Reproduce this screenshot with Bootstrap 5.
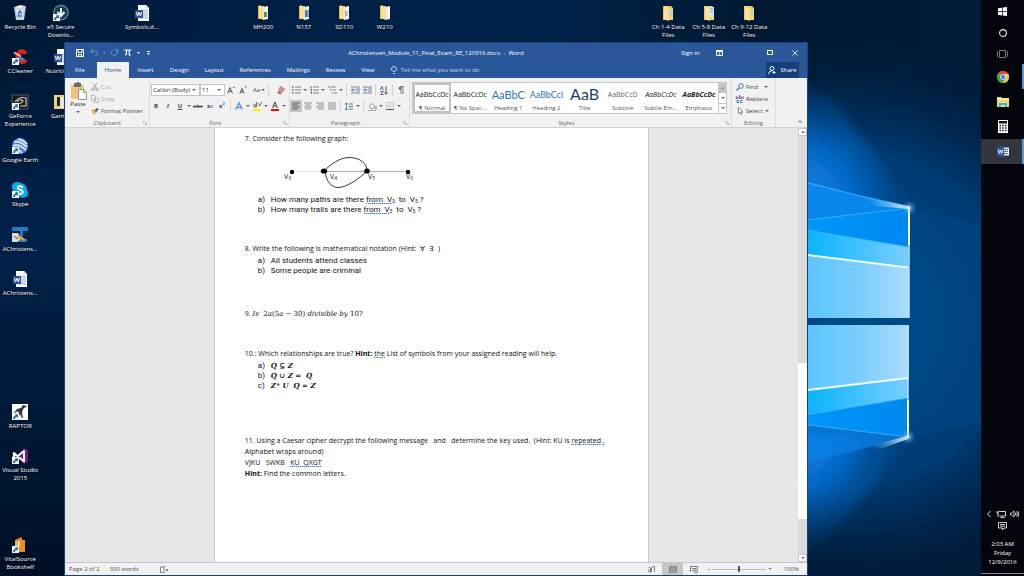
<!DOCTYPE html>
<html lang="en">
<head>
<meta charset="utf-8">
<meta name="viewport" content="width=device-width, initial-scale=1">
<title>AChristensen_Module_11_Final_Exam_RE_120916.docx - Word</title>
<link rel="stylesheet" href="https://cdn.jsdelivr.net/npm/bootstrap@5.3.0/dist/css/bootstrap.min.css">
<style>
body{font:6px/8px "Open Sans","Noto Sans",sans-serif;color:#444;background:#001a38}
svg{display:block;overflow:visible}
.btn{--bs-btn-font-size:6px;--bs-btn-line-height:8px;--bs-btn-padding-x:0;--bs-btn-padding-y:0;--bs-btn-border-width:0;--bs-btn-border-radius:0;--bs-btn-color:inherit;--bs-btn-font-family:inherit;display:flex;align-items:center;justify-content:center;white-space:nowrap;color:inherit;font:inherit}
/* desktop */
.icons{display:grid;grid-template-columns:repeat(24,4.13%);grid-auto-rows:7.7vh;justify-items:center}
.shortcut{width:44px;padding-top:5px;color:#fff;text-decoration:none;text-align:center;text-shadow:0 1px 1px #000}
.shortcut svg{width:16px;height:16px;margin:0 auto 2px}
/* word window */
.wd{top:43px;left:65px;right:174px;bottom:1px;background:#e6e6e6;box-shadow:0 0 0 1px #1c3f75}
.brand{background:#2a579a;color:#fff}
.titlebar{height:19px}
.titlebar .side{flex:1 1 0}
.wintools .btn{width:25px}
.qat .btn{width:14px}
.qat .btn.narrow{width:6px}
.tabs{height:16px}
.tabs a{display:flex;align-items:center;padding:0 8px;color:#fff;text-decoration:none}
.tabs a.on{background:#f1f1f1;color:#2a579a}
.tabs a.file{margin:0 4px 0 2px}
.share{background:#143f78;width:33px}
.ribbon{height:50px;background:#f1f1f1;border-bottom:1px solid #d2d2d2}
.rgroup{border-right:1px solid #dcdcdc;padding-top:3px}
.rlabel{height:8px;color:#666;text-align:center;position:relative;margin-top:auto}
.rlabel svg{position:absolute;right:2px;top:2px}
.row12{height:12px;display:flex;margin-top:3px}
.row12+.row12{margin-top:4px}
.i12{width:12px;height:12px}
.i6{width:6px;height:12px}
.i8{width:6px;height:8px}
.sep{width:5px;height:12px;background:linear-gradient(#d4d4d4,#d4d4d4) center/1px 100% no-repeat}
.cmd{height:12px;gap:2px}
.combo{position:relative;background:#fff;border:1px solid #c6c6c6;display:flex}
.combo select{appearance:none;border:0;background:none;padding:0 0 0 1px;font:inherit;color:#333;width:100%;line-height:10px}
.combo::after,.caret::after{content:"";border:2px solid transparent;border-top-color:#666;border-bottom:0;width:0;height:0}
.combo::after{position:absolute;right:3px;top:4px}
.pressed{background:#c5c5c5}
.gallery{height:32px;background:#fff;border:1px solid #c6c6c6;margin:1px 4px 0 2px}
.gallery .btn{flex:1 1 0;min-width:0;flex-direction:column;color:#555}
.gallery .btn.on{box-shadow:inset 0 0 0 2px #c3c3c3}
.sample{height:18px;line-height:18px;margin-top:2px;font-size:7px;color:#222}
.s-h{font:11px/18px Lato,sans-serif;color:#2e74b5}
.s-h2{font:9px/18px Lato,sans-serif;color:#2e74b5}
.s-t{font:16px/16px Lato,sans-serif;color:#1f3f66}
.gscroll{width:8px;border-left:1px solid #c6c6c6}
.gscroll .btn+.btn{border-top:1px solid #c6c6c6}
.gscroll .btn{width:100%}
/* document */
.sheet{width:59.4%;background:#fff;border:solid #c8c8c8;border-width:0 1px;padding:5px 0 0 30px;font-size:7px;line-height:11px;color:#111;white-space:pre}
.sheet p{margin:0}
.sheet ol{list-style:none;margin:2px 0 0;padding:0 0 0 13px;font:8px/10px Roboto,sans-serif}
.sheet li{display:flex}
.sheet li>span:first-child{width:13px}
.sheet sub,.sheet sup{font-size:5px;line-height:0}
.math{font-family:"DejaVu Serif",serif;font-style:italic;font-size:7px}
.math i{font-style:normal}
.sq{background:linear-gradient(90deg,#3f78d8 50%,#bcd0f2 50%) 0 100%/2px 1px repeat-x}
.graph{width:180px;height:49px}
.gap-a{height:28px}.gap-b{height:32px}.gap-c{height:44px}
.vscroll{width:9px;background:#dadada}
.vscroll .btn{height:8px;background:#fff;border:1px solid #c6c6c6}
.thumb{background:#fff;flex:0 0 36%}
.thumb-end{flex:0 0 8%}
.status{height:13px;background:#f1f1f1;border-top:1px solid #c6c6c6;color:#555}
.words{margin:0 21px 0 10px}
.vbtn{width:21px}
.zoom{appearance:none;width:54px;height:9px;background:linear-gradient(#bbb,#bbb) center/100% 1px no-repeat;margin:0 2px}
.zoom::-webkit-slider-thumb{appearance:none;width:2px;height:6px;background:#555}
/* taskbar */
.taskbar{width:43px;background:#02060c;color:#fff;padding:1px 0 2px}
.taskbar .btn{width:100%;height:25px}
.taskbar .sys{height:21px}
.taskbar .open{box-shadow:inset -2px 0 #5b9bd5}
.taskbar .active{background:#33373b}
.clock{line-height:9px;margin:9px 0 6px}
.edge{border-top:1px solid #888}
</style>
</head>
<body class="vh-100 d-flex overflow-hidden">

<svg width="0" height="0" class="position-absolute" aria-hidden="true">
<defs>
<symbol id="lnk" viewBox="0 0 7 7"><rect width="7" height="7" fill="#f4f8fc"/><path d="M1.3 6V4.5Q1.4 3 3.3 2.900V1.300H5.800V4.600H4.800V3.800Q3 3.600 3 6Z" fill="#1c5ba8"/></symbol>
<symbol id="folder" viewBox="0 0 16 16"><path d="M3 1h6v13H3z" fill="#e3bc53"/><path d="M4 0l5 2v13l-5-2z" fill="#fbdf8d"/><path d="M8 2l5-1v13l-5 1z" fill="#f2f2ee"/><path d="M9 2v13" stroke="#cfcbb8" stroke-width=".7"/></symbol>
<symbol id="folder2" viewBox="0 0 16 16"><path d="M3 1h8l2 2v12H3z" fill="#edc659"/><path d="M4 1l5 2v13l-5-2z" fill="#ffe398"/><path d="M8 3h5v12H8z" fill="#f3d683"/><path d="M10 5h2v6h-2z" fill="#a8cfe6"/></symbol>
<symbol id="docx" viewBox="0 0 16 16"><path d="M4 0h8l3 3v13H4z" fill="#fff"/><path d="M12 0v3h3" fill="#c8d4e4"/><path d="M9 5h5M9 7h5M9 9h5M9 11h5M6 13h8" stroke="#7b98c4" stroke-width=".8"/><rect x="1" y="5" width="8" height="8" fill="#2a5699"/><path d="M2.500 7l1 4L5 7.300 6.500 11l1-4" fill="none" stroke="#fff" stroke-width="1"/></symbol>
<symbol id="launch" viewBox="0 0 4 4"><path d="M0 3V0h3M2 2l2 2M4 2v2H2" fill="none" stroke="#888" stroke-width=".7"/></symbol>
</defs>
</svg>

<main class="position-relative flex-grow-1 overflow-hidden">
<svg class="position-absolute w-100 h-100" viewBox="0 0 981 576" preserveAspectRatio="xMaxYMid slice" aria-hidden="true">
<defs>
<linearGradient id="base" x1="0" y1="0" x2="1" y2="0"><stop offset="0" stop-color="#001733"/><stop offset=".14" stop-color="#001d40"/><stop offset=".55" stop-color="#00234a"/><stop offset=".78" stop-color="#001832"/><stop offset="1" stop-color="#001a38"/></linearGradient>
<linearGradient id="leftside" x1="0" y1="0" x2="0" y2="1"><stop offset="0" stop-color="#00193a" stop-opacity="0"/><stop offset=".4" stop-color="#002249"/><stop offset=".65" stop-color="#001b3c"/><stop offset="1" stop-color="#000f26"/></linearGradient>
<radialGradient id="glow" gradientUnits="userSpaceOnUse" cx="850" cy="318" r="280"><stop offset="0" stop-color="#005cae"/><stop offset=".3" stop-color="#004683"/><stop offset=".6" stop-color="#003a72"/><stop offset="1" stop-color="#00234a" stop-opacity="0"/></radialGradient>
<radialGradient id="beam" gradientUnits="userSpaceOnUse" cx="800" cy="200" r="130"><stop offset="0" stop-color="#0a86ec"/><stop offset=".4" stop-color="#066cce" stop-opacity=".95"/><stop offset="1" stop-color="#00407c" stop-opacity="0"/></radialGradient>
<radialGradient id="beam2" gradientUnits="userSpaceOnUse" cx="800" cy="440" r="120"><stop offset="0" stop-color="#0a86ec"/><stop offset=".4" stop-color="#066cce" stop-opacity=".9"/><stop offset="1" stop-color="#00407c" stop-opacity="0"/></radialGradient>
<linearGradient id="pane" x1="0" y1="0" x2="1" y2="0"><stop offset="0" stop-color="#55c4fe"/><stop offset=".6" stop-color="#80cffe"/><stop offset="1" stop-color="#abdcff"/></linearGradient>
<linearGradient id="cyan" x1="0" y1="0" x2="1" y2="0"><stop offset="0" stop-color="#00b2fe"/><stop offset="1" stop-color="#78ceff"/></linearGradient>
<linearGradient id="blue" x1="0" y1="0" x2="1" y2="0"><stop offset="0" stop-color="#0098fa"/><stop offset="1" stop-color="#0088f0"/></linearGradient>
<linearGradient id="flare" x1="0" y1="0" x2="1" y2="0"><stop offset="0" stop-color="#2cb0ff" stop-opacity="0"/><stop offset="1" stop-color="#f2fbff"/></linearGradient>
<radialGradient id="spark"><stop offset="0" stop-color="#fff"/><stop offset=".3" stop-color="#8fd4ff" stop-opacity=".5"/><stop offset="1" stop-color="#1b82dc" stop-opacity="0"/></radialGradient>
<filter id="soft" x="-20%" y="-20%" width="140%" height="140%"><feGaussianBlur stdDeviation="5"/></filter>
</defs>
<rect width="981" height="576" fill="url(#base)"/>
<rect width="64" height="576" fill="url(#leftside)"/>
<rect x="560" y="38" width="421" height="538" fill="url(#glow)"/>
<path d="M780 70L835 100 880 160 909 208 780 208z" fill="url(#beam)" filter="url(#soft)"/>
<path d="M780 570L840 525 880 480 908 437 780 430z" fill="url(#beam2)" filter="url(#soft)"/>
<path d="M800 180L909 208 800 222z" fill="#0887ec"/>
<path d="M800 465L908 437 800 423z" fill="#0880e4" opacity=".75"/>
<path d="M909 208L981 226V423L909 437z" fill="#004a8a" opacity=".45"/>
<path d="M800 221L909 207V318H800z" fill="url(#blue)"/>
<path d="M800 229L908 247V268H800z" fill="url(#cyan)"/>
<path d="M800 254L909 268V318H800z" fill="url(#pane)"/>
<path d="M800 325H909V379L800 392z" fill="url(#pane)"/>
<path d="M800 391L908 378V398L800 416z" fill="url(#cyan)"/>
<path d="M800 416L908 398V437L800 424z" fill="url(#blue)"/>
<path d="M800 254L908 267.500M800 391L908 378" stroke="#f0fbff" stroke-width="1.800"/>
<path d="M800 181L909 208M800 221L909 208M800 229L908 247M800 416L908 398M800 424L908 437" stroke="#4fbcff" stroke-width=".7"/>
<path d="M909 207V318" stroke="#b8e4ff" stroke-width="1.500"/><path d="M908 325V437" stroke="#b8e4ff" stroke-width="1.500"/>
<path d="M909 208V245M908 400V437" stroke="#fff" stroke-width="2"/>
<path d="M862 195L910 206.500 909 209 875 206z" fill="url(#flare)"/>
<path d="M870 446L907 436 908 439 880 449z" fill="url(#flare)"/>
<circle cx="909" cy="208" r="8" fill="url(#spark)"/><circle cx="908" cy="437" r="8" fill="url(#spark)"/>
<rect x="800" y="318" width="109" height="7" fill="#004a84"/>
</svg>

<div class="icons position-absolute w-100 h-100">
<a href="#" class="shortcut" style="grid-area:1/1"><svg viewBox="0 0 16 16"><path d="M2 2l12-1-2 14H4z" fill="#c9d0d6"/><path d="M3 2l5 1 5-2-5-1z" fill="#f5f7f8"/><path d="M5 4l1 10M11 4l-1 10" stroke="#eef1f3"/><path d="M6 9l2-3 2 3M10 11H6l1-2" fill="none" stroke="#1e7fd0" stroke-width="1.300"/></svg>Recycle Bin</a>
<a href="#" class="shortcut" style="grid-area:1/2"><svg viewBox="0 0 16 16"><circle cx="8" cy="7.500" r="7.200" fill="#163d4d" stroke="#6f8b91" stroke-width="1.200"/><path d="M8 3v8M4.500 7L8 11l3.500-4" stroke="#e8f4f4" stroke-width="2" fill="none"/><use href="#lnk" x="0" y="9" width="7" height="7"/></svg>e5 Secure<br>Downlo...</a>
<a href="#" class="shortcut" style="grid-area:1/4"><svg><use href="#docx"/></svg>Symbols.d...</a>
<a href="#" class="shortcut" style="grid-area:1/7"><svg viewBox="0 0 16 16"><use href="#folder"/><path d="M9 7h3v5H9z" fill="#4b9a62"/></svg>MH200</a>
<a href="#" class="shortcut" style="grid-area:1/8"><svg viewBox="0 0 16 16"><use href="#folder"/><path d="M9 5h2v7H9z" fill="#2d7fc4"/><path d="M12 5v7" stroke="#444"/></svg>N137</a>
<a href="#" class="shortcut" style="grid-area:1/9"><svg viewBox="0 0 16 16"><use href="#folder"/><path d="M9 6h2.500v5H9z" fill="#a9b3c0"/></svg>SD110</a>
<a href="#" class="shortcut" style="grid-area:1/10"><svg><use href="#folder"/></svg>W210</a>
<a href="#" class="shortcut" style="grid-area:1/17"><svg><use href="#folder2"/></svg>Ch 1-4 Data<br>Files</a>
<a href="#" class="shortcut" style="grid-area:1/18"><svg viewBox="0 0 16 16"><use href="#folder2"/><path d="M8 2h5v10H8z" fill="#d6e8f4"/><path d="M9 4h3M9 7h3" stroke="#5f9fce"/></svg>Ch 5-8 Data<br>Files</a>
<a href="#" class="shortcut" style="grid-area:1/19"><svg><use href="#folder2"/></svg>Ch 9-12 Data<br>Files</a>
<a href="#" class="shortcut" style="grid-area:2/1"><svg viewBox="0 0 16 16"><path d="M15.500 4Q13-.5 8.500.500 3 2 3.500 8q.5 6.500 6.500 7 4 0 5.500-3l-3-2q-1.500 2-3.500 1-2-1.500-1-4.500 1.500-3 4-1z" fill="#d8261c"/><path d="M2 3.500l7 4" stroke="#e2c79c" stroke-width="1.600"/><path d="M7.500 7.500l5 2-1.500 3-5-3z" fill="#3b8fd0"/><use href="#lnk" x="0" y="9" width="7" height="7"/></svg>CCleaner</a>
<a href="#" class="shortcut" style="grid-area:2/2"><svg><use href="#docx"/></svg>Nutrition...</a>
<a href="#" class="shortcut" style="grid-area:3/1"><svg viewBox="0 0 16 16"><rect y="1" width="16" height="14" fill="#17191a" stroke="#70757a" stroke-width=".7"/><path d="M3 8q4-6 11-4v8H8M5 8q3-4 6-1-2 3-4 2" fill="none" stroke="#c7cbcd" stroke-width="1.200"/><use href="#lnk" x="0" y="9" width="7" height="7"/></svg>GeForce<br>Experience</a>
<a href="#" class="shortcut" style="grid-area:3/2"><svg viewBox="0 0 16 16"><path d="M1 1h11v14H1z" fill="#efd17c"/><path d="M4 3h3v9H4z" fill="#222"/><path d="M7 3h5v11H7z" fill="#e8e6dc"/></svg>Games</a>
<a href="#" class="shortcut" style="grid-area:4/1"><svg viewBox="0 0 16 16"><circle cx="8" cy="8" r="8" fill="#4f83e8"/><path d="M2 4q5-2 13 5M1 8q5-3 13 4M6 1q5 1 9 5M3 12q4-1 7 3" fill="none" stroke="#e3edfc" stroke-width="1.700"/><use href="#lnk" x="0" y="9" width="7" height="7"/></svg>Google Earth</a>
<a href="#" class="shortcut" style="grid-area:5/1"><svg viewBox="0 0 16 16"><circle cx="5" cy="5" r="5" fill="#00aff0"/><circle cx="11" cy="11" r="5" fill="#00aff0"/><circle cx="8" cy="8" r="7" fill="#00aff0"/><path d="M10.800 5.500Q8 3 6 5q-1 2 2.500 2.800Q12 9 10.500 11 8 13 5.500 10.500" fill="none" stroke="#fff" stroke-width="1.900"/><use href="#lnk" x="0" y="9" width="7" height="7"/></svg>Skype</a>
<a href="#" class="shortcut" style="grid-area:6/1"><svg viewBox="0 0 16 16"><path d="M0 0h16v4h-5v8h4v3H7v-3h1V4H0z" fill="#2a78bd"/><path d="M0 6h6l3 5-3 4H0z" fill="#dcdcd6"/><path d="M2 9l4 3" stroke="#555"/><path d="M6 8l7 4-1 2-7-4z" fill="#f0a830"/></svg>AChristens...</a>
<a href="#" class="shortcut" style="grid-area:7/1"><svg><use href="#docx"/></svg>AChristens...</a>
<a href="#" class="shortcut" style="grid-area:10/1"><svg viewBox="0 0 16 16"><rect width="16" height="16" fill="#fff"/><path d="M15 2l-4-1-2 3-4 1-4 5 5-3 1 3-2 4h1l2-4 2 4h1l-1-5 1-4z" fill="#3a3038"/><use href="#lnk" x="0" y="9" width="7" height="7"/></svg>RAPTOR</a>
<a href="#" class="shortcut" style="grid-area:11/1"><svg viewBox="0 0 16 16"><path d="M0 5l2-1 4 3.500 6-7.500 4 2v12l-4 2-6-6-4 3-2-1z" fill="#68217a"/><path d="M2 5l10 8.500V3L2 11z" fill="none" stroke="#fff" stroke-width="1.900" stroke-linejoin="round"/><use href="#lnk" x="0" y="9" width="7" height="7"/></svg>Visual Studio<br>2015</a>
<a href="#" class="shortcut" style="grid-area:13/1"><svg viewBox="0 0 16 16"><path d="M3 3l7-3v3h3v12H3z" fill="#f58a1f"/><path d="M3 4h3v11H3z" fill="#fbb03b"/><path d="M6 4h2v5l-1-1-1 1z" fill="#fff3df"/><use href="#lnk" x="0" y="9" width="7" height="7"/></svg>VitalSource<br>Bookshelf</a>
</div>

<section class="wd position-absolute d-flex flex-column">
<header class="brand">
<div class="titlebar d-flex align-items-stretch">
<div class="qat side d-flex">
<button class="btn ms-2" aria-label="Save"><svg width="8" height="8" viewBox="0 0 8 8"><path d="M.5.500h7v7h-7zM2 .5v3h4v-3M2.500 7.500V5.500h3v2" fill="none" stroke="#fff"/></svg></button>
<button class="btn" aria-label="Undo"><svg width="8" height="7" viewBox="0 0 8 7"><path d="M3 0L.7 2.300 3 4.500M1 2.300h4q2.500 0 2.500 2T5 6.500" fill="none" stroke="#6f90c2"/></svg></button>
<button class="btn narrow" aria-label="Undo menu"><svg width="3" height="2"><path d="M0 0h3L1.500 2z" fill="#5f83ba"/></svg></button>
<button class="btn" aria-label="Redo"><svg width="8" height="7" viewBox="0 0 8 7"><path d="M6.500 1.500A3 3 0 1 1 3 .9M4.500.5h3v3" fill="none" stroke="#6f90c2"/></svg></button>
<button class="btn" aria-label="Equation"><svg width="8" height="7" viewBox="0 0 8 7"><path d="M.3 1h7.200M2.500 1v3.500L1.500 6.500M5.200 1v4.500q.3 1 1.500.5" fill="none" stroke="#fff" stroke-width="1.200"/></svg></button>
<button class="btn narrow" aria-label="Equation menu"><svg width="3" height="2"><path d="M0 0h3L1.500 2z" fill="#fff"/></svg></button>
<button class="btn" aria-label="Customize toolbar"><svg width="3" height="4" viewBox="0 0 3 4"><path d="M0 .5h3" stroke="#fff"/><path d="M0 2h3L1.500 4z" fill="#fff"/></svg></button>
</div>
<div class="align-self-center">AChristensen_Module_11_Final_Exam_RE_120916.docx&nbsp; - &nbsp;Word</div>
<div class="wintools side d-flex justify-content-end">
<button class="btn me-1">Sign in</button>
<button class="btn" aria-label="Ribbon display options"><svg width="7" height="6" viewBox="0 0 7 6"><path d="M.5.500h6v5h-6z" fill="none" stroke="#fff"/><path d="M0 0h7v2H0z" fill="#fff"/><path d="M3.500 2.500v2.500M2.500 3.700l1-1 1 1" stroke="#fff" stroke-width=".6" fill="none"/></svg></button>
<button class="btn" aria-label="Minimize"><svg width="6" height="1"><path d="M0 .5h6" stroke="#44699f"/></svg></button>
<button class="btn" aria-label="Maximize"><svg width="6" height="5" viewBox="0 0 6 5"><path d="M.5.500h5v4h-5z" fill="none" stroke="#fff"/></svg></button>
<button class="btn" aria-label="Close"><svg width="6" height="6" viewBox="0 0 6 6"><path d="M.5.500l5 5M5.500.500l-5 5" stroke="#fff" stroke-width=".8"/></svg></button>
</div>
</div>
<nav class="tabs d-flex">
<a href="#" class="file">File</a><a href="#" class="on">Home</a><a href="#">Insert</a><a href="#">Design</a><a href="#">Layout</a><a href="#">References</a><a href="#">Mailings</a><a href="#">Review</a><a href="#">View</a>
<a href="#" class="gap-1" style="color:#c5d3e8"><svg width="6" height="8" viewBox="0 0 6 8"><path d="M2 5.500Q.5 4.500.5 2.800 1 .5 3 .5t2.500 2.300Q5.500 4.500 4 5.500zM2 7.500h2" fill="none" stroke="#dbe5f3" stroke-width=".9"/></svg>Tell me what you want to do</a>
<button class="btn share ms-auto me-2 gap-1"><svg width="8" height="8" viewBox="0 0 8 8"><circle cx="4" cy="2.500" r="2" fill="none" stroke="#fff"/><path d="M.5 8Q1 4.800 4 4.800M6 5v3M4.500 6.500h3" fill="none" stroke="#fff"/></svg>Share</button>
</nav>
</header>

<div class="ribbon d-flex">
<div class="rgroup d-flex flex-column" style="width:85px">
<div class="d-flex">
<button class="btn flex-column" style="width:26px"><svg width="18" height="18" viewBox="0 0 18 18"><path d="M2 3h13v14H2z" fill="#eec47a"/><path d="M5 1h7v4H5z" fill="#6b6b6b"/><path d="M8 .5h2" stroke="#6b6b6b"/><path d="M9.500 7.500h5l3 3v7h-8z" fill="#fff" stroke="#7b7b7b" stroke-width=".8"/><path d="M14.500 7.500v3h3" fill="none" stroke="#7b7b7b" stroke-width=".7"/></svg><span class="text-dark">Paste</span><span class="caret i8 d-flex justify-content-center align-items-center"></span></button>
<div>
<button class="btn cmd" style="color:#a8a8a8"><svg width="8" height="8" viewBox="0 0 8 8"><path d="M2 0l3.500 5.500M6 0L2.500 5.500" stroke="#aaa"/><circle cx="1.800" cy="6.300" r="1.300" fill="none" stroke="#aaa"/><circle cx="6" cy="6.300" r="1.300" fill="none" stroke="#aaa"/></svg>Cut</button>
<button class="btn cmd" style="color:#a8a8a8"><svg width="8" height="8" viewBox="0 0 8 8"><path d="M.5.500h3l1 1v4h-4zM3.500 3h3l1 1v3.500h-4z" fill="#f4eef4" stroke="#b3a4b3" stroke-width=".8"/></svg>Copy</button>
<button class="btn cmd"><svg width="8" height="8" viewBox="0 0 8 8"><path d="M0 3l4-1 2 3-3 3z" fill="#e6b566"/><path d="M3.500 3.500L6 1l1.800.8L5.500 5z" fill="#555"/></svg>Format Painter</button>
</div>
</div>
<div class="rlabel">Clipboard<svg width="4" height="4"><use href="#launch"/></svg></div>
</div>

<div class="rgroup d-flex flex-column" style="width:140px">
<div class="row12">
<label class="combo" style="width:49px;margin-left:1px"><select aria-label="Font"><option>Calibri (Body)</option></select></label><label class="combo" style="width:25px"><select aria-label="Font size"><option>11</option></select></label>
<button class="btn i12" aria-label="Grow font"><svg width="8" height="8" viewBox="0 0 8 8"><path d="M.5 7.500L3 1.500 5.500 7.500M1.500 5.500h3" fill="none" stroke="#555"/><path d="M5.500 1.800h2.500L6.700.3z" fill="#2a6fb8"/></svg></button>
<button class="btn i12" aria-label="Shrink font"><svg width="8" height="8" viewBox="0 0 8 8"><path d="M1 7.500L3 2.500 5 7.500M1.700 6h2.600" fill="none" stroke="#555"/><path d="M5.500.5h2.500L6.700 2z" fill="#2a6fb8"/></svg></button>
<button class="btn ms-1">Aa</button><button class="btn i6 caret" aria-label="Change case"></button><span class="sep"></span>
<button class="btn i12 ms-1" aria-label="Clear formatting"><svg width="9" height="9" viewBox="0 0 9 9"><path d="M1 5l4-4 3.500 2L4.500 7.500z" fill="#e58a94"/><path d="M1 5l3.500 2.500L3 8.500.3 6.500z" fill="#b8445a"/><path d="M2 4l1.500-4L5 3" stroke="#666" fill="none" stroke-width=".7"/></svg></button>
</div>
<div class="row12">
<button class="btn i12 fw-bold">B</button><button class="btn i12 fst-italic fw-bold" style="font-family:'Liberation Serif',serif">I</button><button class="btn i12 text-decoration-underline fw-bold">U</button><button class="btn i6 caret" aria-label="Underline style"></button>
<button class="btn i12 text-decoration-line-through">abc</button><button class="btn i12 fw-bold">x<sub style="font-size:4px;color:#2a6fb8">2</sub></button><button class="btn i12 fw-bold">x<sup style="font-size:4px;color:#2a6fb8">2</sup></button><span class="sep"></span>
<button class="btn i12" aria-label="Text effects"><svg width="8" height="8" viewBox="0 0 8 8"><path d="M.8 7.500L4 1 7.200 7.500M2 5.500h4" fill="none" stroke="#5b9bd5" stroke-width="1.500"/></svg></button><button class="btn i6 caret" aria-label="Text effects menu"></button>
<button class="btn i12" aria-label="Highlight"><svg width="9" height="10" viewBox="0 0 9 10"><path d="M0 8h8v2H0z" fill="#ffee00"/><path d="M1 2.500v3.500h2V4H1M5 2l1.500 3L9 1M3.500 1v5" fill="none" stroke="#666" stroke-width=".9"/></svg></button><button class="btn i6 caret" aria-label="Highlight menu"></button>
<button class="btn i12" aria-label="Font color"><svg width="8" height="10" viewBox="0 0 8 10"><path d="M0 8h8v2H0z" fill="#f00"/><path d="M1.500 7L4 1 6.500 7M2.500 5h3" fill="none" stroke="#444"/></svg></button><button class="btn i6 caret" aria-label="Font color menu"></button>
</div>
<div class="rlabel pe-2">Font<svg width="4" height="4"><use href="#launch"/></svg></div>
</div>

<div class="rgroup d-flex flex-column" style="width:120px">
<div class="row12">
<button class="btn i12" aria-label="Bullets"><svg width="9" height="8" viewBox="0 0 9 8"><path d="M3 1h6M3 4h6M3 7h6" stroke="#777" stroke-width=".9"/><path d="M0 1h1.500M0 4h1.500M0 7h1.500" stroke="#2a6fb8" stroke-width="1.500"/></svg></button><button class="btn i6 caret" aria-label="Bullets menu"></button>
<button class="btn i12" aria-label="Numbering"><svg width="9" height="8" viewBox="0 0 9 8"><path d="M3 1h6M3 4h6M3 7h6" stroke="#777" stroke-width=".9"/><path d="M1 0v2M.5 3h1v2M.5 6h1v2" stroke="#2a6fb8" stroke-width=".9" fill="none"/></svg></button><button class="btn i6 caret" aria-label="Numbering menu"></button>
<button class="btn i12" aria-label="Multilevel list"><svg width="9" height="8" viewBox="0 0 9 8"><path d="M2.500 1H8M4.500 4H8M6 7h3" stroke="#777" stroke-width=".9"/><path d="M0 1h1.500M2 4h1.500M4 7h1" stroke="#2a6fb8" stroke-width="1.200"/></svg></button><button class="btn i6 caret" aria-label="Multilevel menu"></button><span class="sep"></span>
<button class="btn i12" aria-label="Decrease indent"><svg width="9" height="8" viewBox="0 0 9 8"><path d="M0 1h9M5 3h4M5 5h4M0 7h9" stroke="#777" stroke-width=".9"/><path d="M4 4H.5M2 2.500L.5 4 2 5.500" fill="none" stroke="#2a6fb8" stroke-width=".9"/></svg></button>
<button class="btn i12" aria-label="Increase indent"><svg width="9" height="8" viewBox="0 0 9 8"><path d="M0 1h9M5 3h4M5 5h4M0 7h9" stroke="#777" stroke-width=".9"/><path d="M0 4h3.500M2 2.500L3.500 4 2 5.500" fill="none" stroke="#2a6fb8" stroke-width=".9"/></svg></button><span class="sep"></span>
<button class="btn i12" aria-label="Sort"><svg width="8" height="9" viewBox="0 0 8 9"><path d="M.3 4L1.800.5 3.300 4" fill="none" stroke="#2a6fb8"/><path d="M.5 5.500h3L.5 8.500h3" fill="none" stroke="#8a4b9c"/><path d="M6 0v8M4.500 6.500L6 8.300l1.500-1.800" fill="none" stroke="#555"/></svg></button><span class="sep"></span>
<button class="btn i12 fw-bold" aria-label="Show marks"><svg width="6" height="8" viewBox="0 0 6 8"><path d="M3 .5H2.500a1.800 1.800 0 0 0 0 3.600H3z" fill="#666"/><path d="M3 0v8M5 0v8M2.500.500H6" stroke="#666" stroke-width=".8"/></svg></button>
</div>
<div class="row12">
<button class="btn i12 pressed" aria-label="Align left"><svg width="8" height="8" viewBox="0 0 8 8"><path d="M0 1h8M0 3h6M0 5h8M0 7h6" stroke="#555" stroke-width=".9"/></svg></button>
<button class="btn i12" aria-label="Center"><svg width="8" height="8" viewBox="0 0 8 8"><path d="M0 1h8M1 3h6M0 5h8M1 7h6" stroke="#888" stroke-width=".9"/></svg></button>
<button class="btn i12" aria-label="Align right"><svg width="8" height="8" viewBox="0 0 8 8"><path d="M0 1h8M2 3h6M0 5h8M2 7h6" stroke="#888" stroke-width=".9"/></svg></button>
<button class="btn i12" aria-label="Justify"><svg width="8" height="8" viewBox="0 0 8 8"><path d="M0 1h8M0 3h8M0 5h8M0 7h8" stroke="#888" stroke-width=".9"/></svg></button><span class="sep"></span>
<button class="btn i12" aria-label="Line spacing"><svg width="8" height="9" viewBox="0 0 8 9"><path d="M4 2h4M4 4.500h4M4 7h4" stroke="#777"/><path d="M1.500 1v7M0 2.500L1.500.800 3 2.500M0 6.500l1.500 1.700L3 6.500" fill="none" stroke="#2a6fb8" stroke-width=".8"/></svg></button><button class="btn i6 caret" aria-label="Line spacing menu"></button><span class="sep"></span>
<button class="btn i12" aria-label="Shading"><svg width="9" height="9" viewBox="0 0 9 9"><path d="M1 4.500L4 1.500l3 3L4 7z" fill="#fff" stroke="#666" stroke-width=".8"/><path d="M8 4.500v3" stroke="#2a6fb8"/><path d="M0 8.500h8" stroke="#aaa"/></svg></button><button class="btn i6 caret" aria-label="Shading menu"></button>
<button class="btn i12" aria-label="Borders"><svg width="8" height="8" viewBox="0 0 8 8"><path d="M.5.500h7v7M.5.500v7M4 0v8M0 4h8" fill="none" stroke="#c3c3c3" stroke-width=".8"/><path d="M0 7.500h8" stroke="#555"/></svg></button><button class="btn i6 caret" aria-label="Borders menu"></button>
</div>
<div class="rlabel pe-2">Paragraph<svg width="4" height="4"><use href="#launch"/></svg></div>
</div>

<div class="rgroup d-flex flex-column flex-grow-1" style="min-width:0">
<div class="gallery d-flex">
<button class="btn on"><span class="sample">AaBbCcDc</span><span>¶ Normal</span></button>
<button class="btn"><span class="sample">AaBbCcDc</span><span>¶ No Spac...</span></button>
<button class="btn"><span class="sample s-h">AaBbC</span><span>Heading 1</span></button>
<button class="btn"><span class="sample s-h2">AaBbCcl</span><span>Heading 2</span></button>
<button class="btn"><span class="sample s-t">AaB</span><span>Title</span></button>
<button class="btn"><span class="sample" style="color:#666">AaBbCcD</span><span>Subtitle</span></button>
<button class="btn"><span class="sample fst-italic">AaBbCcDc</span><span>Subtle Em...</span></button>
<button class="btn"><span class="sample fst-italic fw-bold">AaBbCcDc</span><span>Emphasis</span></button>
<div class="gscroll d-flex flex-column"><button class="btn pressed" aria-label="Up"><svg width="3" height="2"><path d="M0 2h3L1.500 0z" fill="#888"/></svg></button><button class="btn caret" aria-label="Down"></button><button class="btn caret" aria-label="More styles"></button></div>
</div>
<div class="rlabel pe-2">Styles<svg width="4" height="4"><use href="#launch"/></svg></div>
</div>

<div class="rgroup d-flex flex-column" style="width:44px">
<div class="ms-1">
<button class="btn cmd"><svg width="8" height="8" viewBox="0 0 8 8"><circle cx="5" cy="3" r="2.300" fill="none" stroke="#3f78b8"/><path d="M3.300 4.700L.5 7.500" stroke="#3f78b8" stroke-width="1.300"/></svg>Find<span class="caret i6 d-flex align-items-center ps-1"></span></button>
<button class="btn cmd"><svg width="8" height="8" viewBox="0 0 8 8"><path d="M0 3.500V2h2v1.500zM3.500 0v3.500h2V2h-2" fill="none" stroke="#8a4b9c" stroke-width=".9"/><path d="M3 5.500H1v2h2M6.500 5.500h-2v2h2M7 1v3" fill="none" stroke="#2a6fb8" stroke-width=".9"/></svg>Replace</button>
<button class="btn cmd"><svg width="8" height="8" viewBox="0 0 8 8"><path d="M2.500.5v6l1.500-1.300L5 7.500l1-.5-1-2h2z" fill="#fff" stroke="#666" stroke-width=".7"/></svg>Select<span class="caret i6 d-flex align-items-center"></span></button>
</div>
<div class="rlabel">Editing</div>
</div>
<div class="d-flex align-items-end justify-content-center" style="width:31px"><button class="btn ms-3 mb-1" aria-label="Collapse ribbon"><svg width="4" height="3" viewBox="0 0 4 3"><path d="M.3 2.500L2 .7l1.700 1.800" fill="none" stroke="#555"/></svg></button></div>
</div>

<div class="d-flex flex-grow-1" style="min-height:0">
<div class="flex-grow-1 d-flex justify-content-center overflow-hidden">
<article class="sheet overflow-hidden"><p>7. Consider the following graph:</p><svg class="graph" viewBox="245 144 180 49" role="img" aria-label="Graph with vertices V3 to V6"><path d="M292 171.500h32" stroke="#ddd"/><path d="M324 171.500h84" stroke="#999" stroke-width=".8"/><path d="M324 171C330 165 340 157 350 157.500S367 163 367 171M325 171C326 180 330 187 338 187.500S360 178 367 171" fill="none" stroke="#222" stroke-width=".9"/><circle cx="292" cy="172" r="2.200"/><ellipse cx="324" cy="171" rx="3.200" ry="2.600"/><ellipse cx="367" cy="171" rx="2.800" ry="2.600"/><circle cx="408" cy="172" r="2.200"/><g font-size="7" fill="#222"><text x="284" y="179">V<tspan font-size="5" dy="1">3</tspan></text><text x="330" y="179">V<tspan font-size="5" dy="1">4</tspan></text><text x="368" y="179">V<tspan font-size="5" dy="1">5</tspan></text><text x="406" y="179">V<tspan font-size="5" dy="1">6</tspan></text></g></svg><ol><li><span>a)</span><span>How many paths are there <span class="sq">from  V</span><sub>3</sub>  to  V<sub>5</sub> ?</span></li><li><span>b)</span><span>How many trails are there <span class="sq">from  V</span><sub>3</sub>  to  V<sub>5</sub> ?</span></li></ol><div class="gap-a"></div><p>8. Write the following is mathematical notation (Hint:  ∀  ∃   )</p><ol><li><span>a)</span><span>All students attend classes</span></li><li><span>b)</span><span>Some people are criminal</span></li></ol><div class="gap-b"></div><p>9. <span class="math">Is  <i>2</i>a<i>(5</i>a <i>− 30)</i> divisible by <i>10?</i></span></p><div class="gap-a"></div><p>10.: Which relationships are true? <b>Hint:</b> <span class="sq">the</span> List of symbols from your assigned reading will help.</p><ol class="fw-bold"><li><span class="fw-normal">a)</span><span class="math">Q <i>⊆</i> Z</span></li><li><span class="fw-normal">b)</span><span class="math">Q <i>∪</i> Z <i>=</i>  Q</span></li><li><span class="fw-normal">c)</span><span class="math">Z<sup>+</sup> U  Q <i>=</i> Z</span></li></ol><div class="gap-c"></div><p>11. Using a Caesar cipher decrypt the following message   and   determine the key used.  (Hint: KU is <span class="sq">repeated .</span></p><p>Alphabet wraps around)</p><p>VJKU   SWKB   <span class="sq">KU  QXGT</span></p><p><b>Hint:</b> Find the common letters.</p></article>
</div>
<div class="vscroll d-flex flex-column"><button class="btn" aria-label="Scroll up"><svg width="4" height="2"><path d="M0 2h4L2 0z" fill="#666"/></svg></button><div class="flex-grow-1"></div><div class="thumb"></div><div class="thumb-end"></div><button class="btn caret" aria-label="Scroll down"></button></div>
</div>

<footer class="status d-flex align-items-center">
<span class="ms-1">Page 2 of 2</span><span class="words">300 words</span>
<svg width="8" height="7" viewBox="0 0 8 7"><path d="M3.500 1H.5v5.500h3M3.500 1q1-1 2-.5M4 1v6M6 3l2 2M8 3L6 5" fill="none" stroke="#666" stroke-width=".8"/></svg>
<div class="ms-auto d-flex align-self-stretch">
<button class="btn vbtn" aria-label="Read mode"><svg width="7" height="7" viewBox="0 0 7 7"><path d="M.5 1l2 1v4.500M3.500 6V1.500L6.500 0v6M1 3v3.500" fill="none" stroke="#777" stroke-width=".9"/></svg></button>
<button class="btn vbtn pressed" aria-label="Print layout"><svg width="8" height="7" viewBox="0 0 8 7"><path d="M0 0h8v7H0z" fill="#888"/><path d="M1 2h6M1 4h6M1 6h6" stroke="#bbb" stroke-width=".7"/></svg></button>
<button class="btn vbtn" aria-label="Web layout"><svg width="8" height="7" viewBox="0 0 8 7"><path d="M.5 6V.500h7V3M2 2.500h4M2 4.500h2" fill="none" stroke="#777"/><circle cx="6" cy="5.200" r="1.600" fill="#ddd" stroke="#666" stroke-width=".8"/></svg></button>
</div>
<button class="btn fw-bold ms-1" aria-label="Zoom out">-</button>
<input class="zoom" type="range" min="10" max="190" value="100" aria-label="Zoom">
<button class="btn fw-bold" aria-label="Zoom in">+</button>
<span class="mx-2 ps-1">100%</span>
</footer>
</section>
</main>

<aside class="taskbar d-flex flex-column">
<button class="btn sys" aria-label="Start"><svg width="9" height="9" viewBox="0 0 9 9"><path d="M0 1.300L4 .7v3.500H0zM4.700.6L9 0v4.200H4.700zM0 4.900h4v3.500L0 7.800zM4.700 4.900H9V9l-4.300-.6z" fill="#fff"/></svg></button>
<button class="btn sys" aria-label="Cortana"><svg width="8" height="8" viewBox="0 0 8 8"><circle cx="4" cy="4" r="3.400" fill="none" stroke="#eee" stroke-width="1.100"/></svg></button>
<button class="btn sys" aria-label="Task view"><svg width="11" height="8" viewBox="0 0 11 8"><path d="M2.500.5h6v7h-6zM1 1.500H.400v5H1M10 1.500h.6v5H10" fill="none" stroke="#999" stroke-width=".8"/></svg></button>
<button class="btn open" aria-label="Chrome"><svg width="12" height="12" viewBox="0 0 12 12"><circle cx="6" cy="6" r="6" fill="#e6b93c"/><path d="M6 6L.8 3A6 6 0 0 1 11.200 3z" fill="#dd4b3e"/><path d="M6 6L.8 3A6 6 0 0 0 6 12l2.600-4.500z" fill="#3aa457"/><path d="M6 3h5.200A6 6 0 0 1 6 12l2.600-4.500z" fill="#f2ca45"/><circle cx="6" cy="6" r="2.800" fill="#fff"/><circle cx="6" cy="6" r="2.200" fill="#4285f4"/></svg></button>
<button class="btn" aria-label="File Explorer"><svg width="12" height="10" viewBox="0 0 12 10"><path d="M0 0h4l1 1h7v9H0z" fill="#f6d873"/><path d="M0 1h12v2H0z" fill="#fbe9a8"/><path d="M2 10V6h8v4H8V8H4v2z" fill="#3bb0e8"/></svg></button>
<button class="btn" aria-label="Calculator"><svg width="10" height="13" viewBox="0 0 10 13"><path d="M0 0h10v13H0z" fill="#fff"/><path d="M1 1h8v2.500H1z" fill="#111"/><path d="M1.500 5.500h7M1.500 8h7M1.500 10.500h7" stroke="#111" stroke-width="1.500" stroke-dasharray="1.500 1.200"/></svg></button>
<button class="btn open active" aria-label="Word"><svg width="12" height="11" viewBox="0 0 12 11"><path d="M6 1.500h6v8H6z" fill="#e8eef7"/><path d="M7 3.500h4M7 5.500h4M7 7.500h4" stroke="#2a5699" stroke-width=".8"/><path d="M0 1l7-1v11l-7-1z" fill="#2a5699"/><path d="M1.300 3.500l1 4 1.200-3.500 1.200 3.500 1-4" fill="none" stroke="#fff" stroke-width=".9"/></svg></button>
<div class="mt-auto d-flex justify-content-center gap-1">
<svg width="6" height="8" viewBox="0 0 6 8"><path d="M4.500 1L1.500 4l3 3" fill="none" stroke="#ddd"/></svg>
<svg width="10" height="8" viewBox="0 0 10 8"><path d="M2.500 1.500h7v4.500h-6M4.500 7.500h4M1 1v2h2M2 3v4" fill="none" stroke="#eee" stroke-width=".9"/></svg>
<svg width="9" height="8" viewBox="0 0 9 8"><path d="M.5 3h1.200L4 1v6L1.700 5H.500zM5.200 2.500q1.200 1.500 0 3M6.500 1.500q2 2.500 0 5M8 1q1.500 3 0 6" fill="none" stroke="#eee" stroke-width=".8"/></svg>
</div>
<svg class="mx-auto mt-1" width="9" height="9" viewBox="0 0 9 9"><path d="M.5.500h8v5.500H6L4.500 8V6h-4zM2 2.500h5M2 4.200h5" fill="none" stroke="#ddd" stroke-width=".9"/></svg>
<div class="clock text-center">2:03 AM<br>Friday<br>12/9/2016</div>
<div class="edge"></div>
</aside>
<script src="https://cdn.jsdelivr.net/npm/bootstrap@5.3.0/dist/js/bootstrap.bundle.min.js"></script>
</body>
</html>
